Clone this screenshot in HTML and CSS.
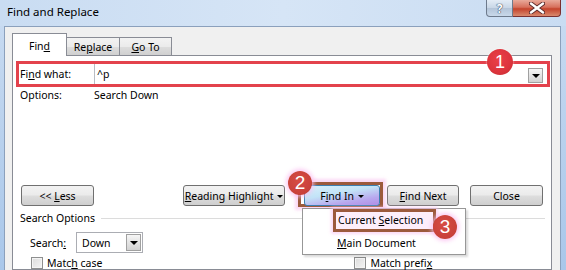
FILE: index.html
```html
<!DOCTYPE html>
<html>
<head>
<meta charset="utf-8">
<link rel="stylesheet" href="styles.css">
</head>
<body>
<div class="titlebar">
  <span class="title">Find and Replace</span>
  <div class="caption">
    <span class="cap help">?</span>
    <span class="cap close">
      <svg width="16" height="12" viewBox="0 0 16 12"><path d="M2 1.5 L14 10.5 M14 1.5 L2 10.5" stroke="#5a2a2a" stroke-width="4.2" stroke-linecap="round"/><path d="M2 1.5 L14 10.5 M14 1.5 L2 10.5" stroke="#ffffff" stroke-width="2.4" stroke-linecap="round"/></svg>
    </span>
  </div>
</div>
<div class="client">
  <div class="tabs">
    <div class="tab active"><span>Fin<u>d</u></span></div>
    <div class="tab"><span>Re<u>p</u>lace</span></div>
    <div class="tab"><span><u>G</u>o To</span></div>
  </div>
  <div class="page">
    <div class="find-row">
      <span class="find-label">Fi<u>n</u>d what:</span>
      <div class="find-input">
        <span class="find-text">^p</span>
        <span class="dd-btn"><span class="tri"></span></span>
      </div>
      <span class="badge badge1">1</span>
    </div>
    <div class="options-row">
      <span class="opt-label">Options:</span>
      <span>Search Down</span>
    </div>
    <div class="button-row">
      <span class="btn btn-less"><span>&lt;&lt; <u>L</u>ess</span></span>
      <span class="btn btn-rh"><span><u>R</u>eading Highlight <span class="small-tri"></span></span></span>
      <div class="findin-wrap">
        <span class="brown-box findin-box"></span>
        <span class="btn btn-findin"><span>F<u>i</u>nd In <span class="small-tri"></span></span></span>
        <span class="badge badge2">2</span>
        <div class="menu">
          <div class="menu-item current">Current <u>S</u>election</div>
          <div class="menu-item"><u>M</u>ain Document</div>
          <span class="badge badge3">3</span>
        </div>
      </div>
      <span class="btn btn-next"><span><u>F</u>ind Next</span></span>
      <span class="btn btn-close"><span>Close</span></span>
    </div>
    <div class="group-row">
      <span>Search Options</span>
      <span class="group-line"></span>
    </div>
    <div class="search-row">
      <span class="search-label">Search<u>:</u></span>
      <div class="combo">
        <span class="combo-text">Down</span>
        <span class="dd-btn combo-btn"><span class="tri"></span></span>
      </div>
    </div>
    <div class="check-row">
      <span class="check"></span><span class="check-text">Matc<u>h</u> case</span>
      <span class="check check2"></span><span class="check-text">Match prefi<u>x</u></span>
    </div>
  </div>
</div>
</body>
</html>
```

FILE: styles.css
```css
html, body {
  margin: 0;
  padding: 0;
}
body {
  width: 566px;
  height: 270px;
  overflow: hidden;
  background: linear-gradient(180deg, #cadcf2 0%, #bcd3ee 40%, #a9c7ea 100%);
  font-family: "Noto Sans", "Open Sans", sans-serif;
  font-size: 10.5px;
  color: #000;
}
u {
  text-decoration: underline;
  text-underline-offset: 1px;
}

/* title bar */
.titlebar {
  height: 26px;
  display: flex;
  align-items: flex-start;
  background: linear-gradient(90deg, #c9dcf2 0%, #d6e5f6 50%, #c9dcf2 100%);
}
.title {
  padding: 4px 0 0 7px;
  font-size: 11.5px;
  line-height: 16px;
}
.caption {
  margin-left: auto;
  margin-right: 5px;
  display: flex;
}
.cap {
  height: 17px;
  box-sizing: border-box;
  display: flex;
  align-items: center;
  justify-content: center;
  border: 1px solid #6d7a8c;
  border-top: none;
}
.help {
  width: 27px;
  border-radius: 0 0 0 4px;
  background: linear-gradient(180deg, #e3ecf6 0%, #c8d6e6 50%, #b3c4d8 51%, #c9d8ea 100%);
  color: #fff;
  font-weight: bold;
  font-size: 12px;
  text-shadow: 0 0 1px #3e4e66, 0 0 1px #3e4e66, 0 0 1px #3e4e66;
}
.close {
  width: 48px;
  border-left: none;
  border-color: #7a3030;
  border-radius: 0 0 4px 0;
  background: linear-gradient(180deg, #e9a99a 0%, #d7705c 45%, #c4432c 55%, #d98a6e 100%);
}

/* client */
.client {
  margin: 0 5px 0 4px;
  height: 237px;
  overflow: hidden;
  border: 1px solid #8ba0bc;
  border-bottom: none;
  background: #f0f0f0;
  padding: 6px 8px 0 7px;
}
.tabs {
  display: flex;
  align-items: flex-end;
  height: 22px;
}
.tab {
  box-sizing: border-box;
  height: 18px;
  border: 1px solid #898c95;
  border-bottom: none;
  background: linear-gradient(180deg, #f3f3f3 0%, #ebebeb 50%, #dddddd 51%, #d0d0d0 100%);
  display: flex;
  align-items: center;
  justify-content: center;
  line-height: 14px;
  padding-top: 1px;
  white-space: nowrap;
}
.tab:nth-child(1) { width: 55px; }
.tab:nth-child(2) { width: 54px; margin-left: -1px; }
.tab:nth-child(3) { width: 53px; margin-left: -1px; }
.tab.active {
  height: 23px;
  background: #fff;
  margin-bottom: -1px;
  position: relative;
  z-index: 1;
  padding-top: 1px;
}

.page {
  border: 1px solid #898c95;
  background: #fff;
  height: 213px;
}

/* find row */
.find-row {
  position: relative;
  margin: 5px 1px 0 3px;
  height: 20px;
  border: 3px solid #e3424c;
  display: flex;
}
.find-label {
  width: 74px;
  padding-left: 1px;
  line-height: 20px;
  white-space: nowrap;
}
.find-input {
  flex: 1;
  border-left: 1px solid #b8bcc4;
  display: flex;
  align-items: center;
  padding-left: 2px;
}
.find-text {
  flex: 1;
  line-height: 20px;
}
.dd-btn {
  box-sizing: border-box;
  width: 15px;
  height: 15px;
  margin-right: 4px;
  margin-top: 3px;
  border: 1px solid #a0a0a0;
  background: linear-gradient(180deg, #f6f6f6 0%, #e4e4e4 50%, #d2d2d2 100%);
  display: flex;
  align-items: center;
  justify-content: center;
}
.tri {
  width: 0;
  height: 0;
  border-left: 4px solid transparent;
  border-right: 4px solid transparent;
  border-top: 4px solid #000;
  margin-top: 1px;
}
.small-tri {
  display: inline-block;
  width: 0;
  height: 0;
  border-left: 3px solid transparent;
  border-right: 3px solid transparent;
  border-top: 3px solid #000;
  vertical-align: middle;
  margin-left: 1px;
}

/* badges */
.badge {
  position: absolute;
  border-radius: 50%;
  background: radial-gradient(circle at 45% 40%, #ea4048 0%, #dc343c 60%, #c02c30 100%);
  color: #fff;
  font-family: "Liberation Sans", "Noto Sans", sans-serif;
  display: flex;
  align-items: center;
  justify-content: center;
  z-index: 5;
}
.badge1 {
  width: 26px;
  height: 26px;
  left: 468px;
  top: -15px;
  font-size: 18px;
  box-shadow: 0 0 2px rgba(255,255,255,0.9);
}
.badge2 {
  width: 24px;
  height: 24px;
  left: -16px;
  top: -14px;
  font-size: 19px;
  background: radial-gradient(circle at 45% 40%, #d64c44 0%, #c8403a 70%, #a9352f 100%);
  box-shadow: 0 0 4px 2px rgba(250, 190, 240, 0.8);
}
.badge3 {
  width: 24px;
  height: 24px;
  left: 130px;
  top: 6px;
  font-size: 19px;
  background: radial-gradient(circle at 45% 40%, #d64c44 0%, #c8403a 70%, #a9352f 100%);
  box-shadow: 0 0 4px 2px rgba(250, 190, 240, 0.8);
}

/* options */
.options-row {
  display: flex;
  margin-top: 1px;
  height: 14px;
  line-height: 14px;
  padding-left: 7px;
}
.opt-label {
  width: 74px;
}

/* buttons */
.button-row {
  display: flex;
  margin-top: 83px;
  margin-left: 8px;
  height: 21px;
}
.btn {
  box-sizing: border-box;
  height: 21px;
  border: 1px solid #707070;
  border-radius: 3px;
  background: linear-gradient(180deg, #f2f2f2 0%, #ebebeb 48%, #dddddd 52%, #cfcfcf 100%);
  display: flex;
  align-items: center;
  justify-content: center;
  line-height: 14px;
  white-space: nowrap;
}
.btn-less { width: 73px; }
.btn-rh { width: 102px; margin-left: 89px; }
.findin-wrap {
  position: relative;
  margin-left: 19px;
  width: 76px;
}
.btn-findin {
  position: relative;
  z-index: 2;
  width: 76px;
  border-color: #3c7fb1;
  background: linear-gradient(170deg, #d8f0fb 0%, #c2e3f7 40%, #b8a6ee 75%, #b08fe8 100%);
}
.brown-box {
  position: absolute;
  border: 3px solid #9c5a3c;
  box-shadow: 0 0 3px 3px rgba(250, 200, 240, 0.7);
}
.findin-box {
  left: -6px;
  right: -3px;
  top: -3px;
  bottom: -1px;
  z-index: 1;
}
.btn-next { width: 72px; margin-left: 7px; }
.btn-close { width: 73px; margin-left: 11px; }

/* menu */
.menu {
  position: absolute;
  left: -2px;
  top: 23px;
  width: 164px;
  height: 47px;
  box-sizing: border-box;
  border: 1px solid #979797;
  background: #fff;
  box-shadow: 2px 2px 2px rgba(0,0,0,0.15);
  z-index: 3;
}
.menu-item {
  margin-left: 30px;
  line-height: 14px;
  padding-left: 4px;
  white-space: nowrap;
}
.menu-item.current {
  box-sizing: border-box;
  width: 103px;
  height: 23px;
  border: 3px solid #9c5a3c;
  background: #fdeefa;
  padding-left: 2px;
  line-height: 17px;
  box-shadow: 0 0 3px 2px rgba(250, 200, 240, 0.7);
  margin-bottom: 4px;
}

/* search options */
.group-row {
  display: flex;
  align-items: center;
  margin-top: 5px;
  height: 14px;
  line-height: 14px;
  padding-left: 7px;
}
.group-line {
  flex: 1;
  height: 1px;
  background: #dcdcdc;
  margin-left: 6px;
  margin-right: 6px;
}
.search-row {
  display: flex;
  align-items: center;
  margin-top: 7px;
  height: 21px;
  padding-left: 17px;
}
.search-label {
  width: 46px;
}
.combo {
  box-sizing: border-box;
  width: 67px;
  height: 21px;
  border: 1px solid #abadb3;
  display: flex;
  align-items: center;
  padding-left: 5px;
}
.combo-text {
  flex: 1;
}
.combo-btn {
  margin: 0 1px 0 0;
  width: 15px;
  height: 17px;
}

.check-row {
  display: flex;
  align-items: center;
  margin-top: 4px;
  height: 12px;
  padding-left: 18px;
}
.check {
  box-sizing: border-box;
  width: 12px;
  height: 12px;
  border: 1px solid #8e8f8f;
  background: linear-gradient(135deg, #dcdcdc 0%, #f4f4f4 100%);
  box-shadow: inset 0 0 0 1px #f4f4f4;
}
.check-text {
  margin-left: 4px;
  line-height: 12px;
}
.check2 {
  margin-left: 252px;
}
```
